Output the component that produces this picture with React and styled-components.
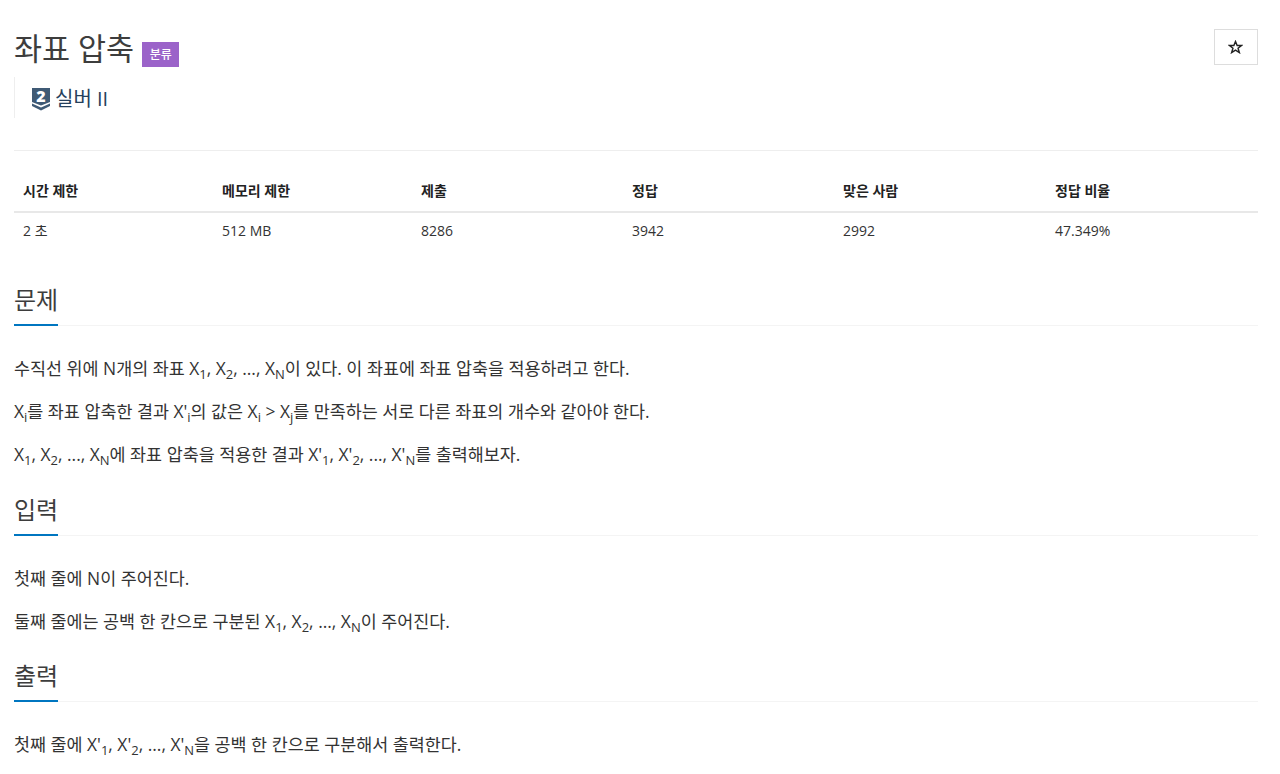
import React from 'react';
import styled, { createGlobalStyle } from 'styled-components';

const GlobalStyle = createGlobalStyle`
  html, body {
    margin: 0;
    padding: 0;
    background: #fff;
    overflow: hidden;
  }
  body {
    font-family: "Open Sans", "Noto Sans CJK KR", sans-serif;
    color: #333;
  }
`;

const columns = [
  { label: '시간 제한', value: '2 초', width: 199 },
  { label: '메모리 제한', value: '512 MB', width: 199 },
  { label: '제출', value: '8286', width: 211 },
  { label: '정답', value: '3942', width: 211 },
  { label: '맞은 사람', value: '2992', width: 212 },
  { label: '정답 비율', value: '47.349%', width: 212 },
];

const Sub = ({ children }) => <Small>{children}</Small>;

const App = () => {
  return (
    <Page>
      <GlobalStyle />
      <Header>
        <div>
          <TitleRow>
            <Title>좌표 압축</Title>
            <Tag>분류</Tag>
          </TitleRow>
          <Tier>
            <svg width="18" height="28" viewBox="0 -3 18 28">
              <path d="M0 0H18V14L9 17.5L0 14Z" fill="#3f5a75" />
              <path d="M0 15.5L9 19.5L18 15.5V18L9 22.5L0 18Z" fill="#3f5a75" />
              <text x="9" y="14" textAnchor="middle" fontSize="16" fontWeight="800" fill="#fff" fontFamily="Open Sans">2</text>
            </svg>
            <span>실버 II</span>
          </Tier>
        </div>
        <StarButton aria-label="star">
          <svg width="15" height="14" viewBox="0 0 24 23" fill="none" stroke="#222" strokeWidth="2.4" strokeLinejoin="miter">
            <path d="M12 2.5L14.7 9H21.8L16.2 13.5L18.3 20.6L12 16.6L5.7 20.6L7.8 13.5L2.2 9H9.3Z" />
          </svg>
        </StarButton>
      </Header>
      <Divider />
      <InfoTable>
        <colgroup>
          {columns.map((c) => <col key={c.label} width={c.width} />)}
        </colgroup>
        <thead>
          <tr>{columns.map((c) => <th key={c.label}>{c.label}</th>)}</tr>
        </thead>
        <tbody>
          <tr>{columns.map((c) => <td key={c.label}>{c.value}</td>)}</tr>
        </tbody>
      </InfoTable>

      <Section>
        <Headline><h2>문제</h2></Headline>
        <Body>
          <p>수직선 위에 N개의 좌표 X<Sub>1</Sub>, X<Sub>2</Sub>, ..., X<Sub>N</Sub>이 있다. 이 좌표에 좌표 압축을 적용하려고 한다.</p>
          <p>X<Sub>i</Sub>를 좌표 압축한 결과 X'<Sub>i</Sub>의 값은 X<Sub>i</Sub> &gt; X<Sub>j</Sub>를 만족하는 서로 다른 좌표의 개수와 같아야 한다.</p>
          <p>X<Sub>1</Sub>, X<Sub>2</Sub>, ..., X<Sub>N</Sub>에 좌표 압축을 적용한 결과 X'<Sub>1</Sub>, X'<Sub>2</Sub>, ..., X'<Sub>N</Sub>를 출력해보자.</p>
        </Body>
      </Section>
      <Section>
        <Headline><h2>입력</h2></Headline>
        <Body>
          <p>첫째 줄에 N이 주어진다.</p>
          <p>둘째 줄에는 공백 한 칸으로 구분된 X<Sub>1</Sub>, X<Sub>2</Sub>, ..., X<Sub>N</Sub>이 주어진다.</p>
        </Body>
      </Section>
      <Section>
        <Headline><h2>출력</h2></Headline>
        <Body>
          <p>첫째 줄에 X'<Sub>1</Sub>, X'<Sub>2</Sub>, ..., X'<Sub>N</Sub>을 공백 한 칸으로 구분해서 출력한다.</p>
        </Body>
      </Section>
    </Page>
  );
};

const Page = styled.div`
  padding: 0 22px 0 14px;
  height: 774px;
  overflow: hidden;
  box-sizing: border-box;
`;

const Header = styled.div`
  display: flex;
  justify-content: space-between;
  align-items: flex-start;
  padding-top: 29px;
`;

const TitleRow = styled.div`
  display: flex;
  align-items: flex-end;
  gap: 8px;
  height: 38px;
`;

const Title = styled.h1`
  margin: 0;
  font-size: 30.5px;
  font-weight: 400;
  line-height: 38px;
  color: #3d3d3d;
`;

const Tag = styled.span`
  display: inline-block;
  width: 37px;
  height: 25px;
  line-height: 25px;
  text-align: center;
  background: #9b63c9;
  color: #fff;
  font-size: 12px;
  font-weight: 500;
`;

const Tier = styled.div`
  display: flex;
  align-items: center;
  gap: 5px;
  height: 41px;
  margin-top: 10px;
  padding-left: 17px;
  border-left: 1px solid #eee;
  font-size: 20px;
  line-height: 34px;
  color: #25405c;

  span {
    margin-top: 3px;
  }

  svg {
    margin-top: 3px;
  }
`;

const StarButton = styled.button`
  display: flex;
  align-items: center;
  justify-content: center;
  width: 44px;
  height: 36px;
  padding: 0 2px 0 0;
  background: #fff;
  border: 1px solid #ddd;
`;

const Divider = styled.div`
  height: 1px;
  margin-top: 32px;
  background: #eee;
`;

const InfoTable = styled.table`
  width: 100%;
  margin-top: 20px;
  border-collapse: collapse;
  table-layout: fixed;
  font-size: 14px;

  th {
    padding: 8px 9px 10px;
    height: 22px;
    text-align: left;
    font-weight: 700;
    color: #222;
    border-bottom: 2px solid #e8e8e8;
  }

  td {
    padding: 6px 9px 8px;
    height: 22px;
    color: #333;
  }
`;

const Section = styled.section`
  &:first-of-type {
    padding-top: 6px;
  }
`;

const Headline = styled.div`
  margin-top: 28.5px;
  border-bottom: 1px solid #f4f4f4;

  h2 {
    display: inline-block;
    margin: 0 0 -1px;
    width: 44px;
    height: 40px;
    font-size: 24px;
    font-weight: 400;
    line-height: 32px;
    color: #3d3d3d;
    border-bottom: 2px solid #0076c0;
    white-space: nowrap;
  }
`;

const Body = styled.div`
  margin-top: 31px;
  font-size: 17.4px;
  line-height: 22px;
  color: #333;

  p {
    margin: 0 0 21.25px;
  }
`;

const Small = styled.sub`
  font-size: 13px;
  line-height: 0;
  position: relative;
  vertical-align: baseline;
  bottom: -4px;
`;

export default App;
